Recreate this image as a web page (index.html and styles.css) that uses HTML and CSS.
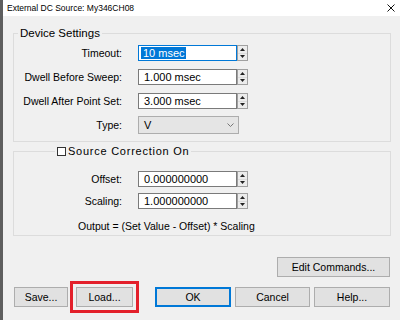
FILE: index.html
```html
<!DOCTYPE html>
<html lang="en">
<head>
  <meta charset="UTF-8">
  <title>External DC Source</title>
  <link rel="stylesheet" href="styles.css">
</head>
<body>

<div class="dialog">
  <div class="titlebar">
    <span class="title">External DC Source: My346CH08</span>
    <svg class="close" width="8" height="8" viewBox="0 0 8 8">
      <path d="M0.5 0.5 L7.5 7.5 M7.5 0.5 L0.5 7.5" stroke="#111" stroke-width="1" fill="none"/>
    </svg>
  </div>

  <div class="content">
    <fieldset class="group settings">
      <legend>Device Settings</legend>

      <div class="row">
        <label>Timeout:</label>
        <span class="field focused"><span class="sel">10 msec</span></span>
        <span class="spin">
          <span class="up"><svg width="5" height="3" viewBox="0 0 5 3"><path d="M2.5 0 L5 3 L0 3 Z" fill="#222"/></svg></span>
          <span class="down"><svg width="5" height="3" viewBox="0 0 5 3"><path d="M0 0 L5 0 L2.5 3 Z" fill="#222"/></svg></span>
        </span>
      </div>

      <div class="row">
        <label>Dwell Before Sweep:</label>
        <span class="field">1.000 msec</span>
        <span class="spin">
          <span class="up"><svg width="5" height="3" viewBox="0 0 5 3"><path d="M2.5 0 L5 3 L0 3 Z" fill="#222"/></svg></span>
          <span class="down"><svg width="5" height="3" viewBox="0 0 5 3"><path d="M0 0 L5 0 L2.5 3 Z" fill="#222"/></svg></span>
        </span>
      </div>

      <div class="row">
        <label>Dwell After Point Set:</label>
        <span class="field">3.000 msec</span>
        <span class="spin">
          <span class="up"><svg width="5" height="3" viewBox="0 0 5 3"><path d="M2.5 0 L5 3 L0 3 Z" fill="#222"/></svg></span>
          <span class="down"><svg width="5" height="3" viewBox="0 0 5 3"><path d="M0 0 L5 0 L2.5 3 Z" fill="#222"/></svg></span>
        </span>
      </div>

      <div class="row">
        <label>Type:</label>
        <span class="combo">
          <span>V</span>
          <svg width="7" height="4" viewBox="0 0 7 4"><path d="M0.5 0.5 L3.5 3.5 L6.5 0.5" stroke="#777" stroke-width="1" fill="none"/></svg>
        </span>
      </div>
    </fieldset>

    <fieldset class="group correction">
      <legend><span class="check"></span>Source Correction On</legend>

      <div class="row">
        <label>Offset:</label>
        <span class="field">0.000000000</span>
        <span class="spin">
          <span class="up"><svg width="5" height="3" viewBox="0 0 5 3"><path d="M2.5 0 L5 3 L0 3 Z" fill="#222"/></svg></span>
          <span class="down"><svg width="5" height="3" viewBox="0 0 5 3"><path d="M0 0 L5 0 L2.5 3 Z" fill="#222"/></svg></span>
        </span>
      </div>

      <div class="row">
        <label>Scaling:</label>
        <span class="field">1.000000000</span>
        <span class="spin">
          <span class="up"><svg width="5" height="3" viewBox="0 0 5 3"><path d="M2.5 0 L5 3 L0 3 Z" fill="#222"/></svg></span>
          <span class="down"><svg width="5" height="3" viewBox="0 0 5 3"><path d="M0 0 L5 0 L2.5 3 Z" fill="#222"/></svg></span>
        </span>
      </div>

      <p class="formula">Output = (Set Value - Offset) * Scaling</p>
    </fieldset>

    <div class="edit-row">
      <button class="btn edit">Edit Commands...</button>
    </div>

    <div class="buttons">
      <button class="btn save">Save...</button>
      <button class="btn load">Load...</button>
      <span class="spacer"></span>
      <button class="btn ok">OK</button>
      <button class="btn cancel">Cancel</button>
      <button class="btn help">Help...</button>
    </div>
  </div>
</div>

</body>
</html>
```

FILE: styles.css
```css
body {
  margin: 0;
  font-family: "Liberation Sans", Arial, sans-serif;
  font-size: 10.5px;
  color: #000;
  background: #f0f0f0;
}

.dialog {
  width: 400px;
  height: 320px;
  box-sizing: border-box;
  border-left: 3px solid #5e5e5e;
  background: #f0f0f0;
  overflow: hidden;
}

.titlebar {
  height: 16px;
  background: #fff;
  display: flex;
  align-items: center;
  justify-content: space-between;
  padding: 0 5px 0 4px;
  font-size: 8.5px;
}

.content {
  padding: 10px 9px 0 10px;
}

.group {
  margin: 0;
  border: 1px solid #dcdcdc;
  min-width: 0;
}

.group legend {
  margin-left: 4px;
  padding: 0 2px;
  line-height: 14px;
  font-size: 11.5px;
}

.settings {
  padding: 5px 0 8px;
}

.correction {
  margin-top: 2px;
  padding: 13px 0 2px;
}

.correction legend {
  margin-left: 41px;
  display: flex;
  align-items: center;
  font-size: 11px;
  letter-spacing: 0.75px;
}

.check {
  width: 7px;
  height: 7px;
  border: 1px solid #333;
  background: #fff;
  margin-right: 2px;
}

.row {
  display: flex;
  align-items: center;
  height: 16px;
  margin-bottom: 8px;
}

.correction .row {
  margin-bottom: 6px;
}

.row:last-child {
  margin-bottom: 0;
}

.row label {
  width: 108px;
  text-align: right;
  margin-right: 16px;
}

.field {
  width: 99px;
  height: 16px;
  box-sizing: border-box;
  border: 1px solid #7a7a7a;
  background: #fff;
  padding-left: 5px;
  line-height: 14px;
  font-size: 11px;
}

.field.focused {
  border-color: #0078d7;
  padding-left: 2px;
}

.sel {
  background: #0078d7;
  color: #fff;
  padding: 0 1px 0 2px;
  display: inline-block;
  line-height: 12px;
}

.spin {
  width: 11px;
  height: 16px;
  box-sizing: border-box;
  border: 1px solid #a0a0a0;
  display: flex;
  flex-direction: column;
  background: #dcdcdc;
  gap: 1px;
}

.spin span {
  flex: 1;
  background: #ececec;
  display: flex;
  align-items: center;
  justify-content: center;
}

.combo {
  width: 101px;
  height: 18px;
  box-sizing: border-box;
  border: 1px solid #adadad;
  background: #e5e5e5;
  display: flex;
  align-items: center;
  justify-content: space-between;
  padding: 0 4px 0 5px;
  font-size: 11px;
}

.formula {
  margin: 10px 0 0 64px;
  line-height: 14px;
}

.edit-row {
  display: flex;
  justify-content: flex-end;
  margin-top: 21px;
  padding-right: 1px;
}

.btn {
  font-family: "Liberation Sans", Arial, sans-serif;
  font-size: 10.5px;
  height: 20px;
  padding: 0;
  background: #e1e1e1;
  border: 1px solid #adadad;
  color: #000;
}

.edit {
  width: 113px;
}

.buttons {
  display: flex;
  margin-top: 10px;
  padding: 0 1px;
  gap: 4px;
}

.save {
  width: 54px;
}

.load {
  width: 57px;
  margin-left: 4px;
  outline: 3px solid #e3202b;
  outline-offset: 3px;
}

.spacer {
  flex: 1;
}

.ok {
  width: 76px;
  border-color: #0078d7;
  box-shadow: inset 0 0 0 1px #0078d7;
}

.cancel {
  width: 75px;
}

.help {
  width: 76px;
}
```
